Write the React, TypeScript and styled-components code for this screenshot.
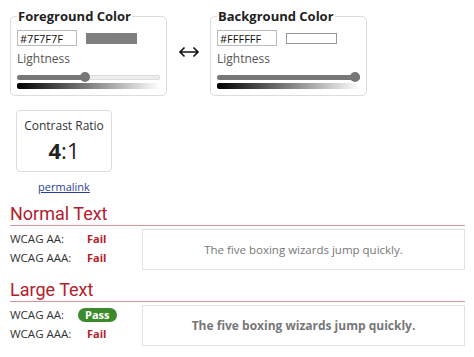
import styled, { createGlobalStyle } from 'styled-components';

const GlobalStyle = createGlobalStyle`
  body {
    margin: 0;
    background: #fff;
    font-family: "Open Sans", "Liberation Sans", sans-serif;
    color: #333;
  }
`;

type ColorPickerProps = {
  title: string;
  hex: string;
  lightness: number;
};

function ColorPicker({ title, hex, lightness }: ColorPickerProps) {
  return (
    <Fieldset>
      <Legend>{title}</Legend>
      <InputRow>
        <HexInput defaultValue={hex} readOnly />
        <Swatch $color={hex} />
      </InputRow>
      <Label>Lightness</Label>
      <Slider>
        <Track>
          <Fill style={{ width: `${lightness}%` }} />
        </Track>
        <Thumb style={{ left: `${lightness}%` }} />
      </Slider>
      <Gradient />
    </Fieldset>
  );
}

type Result = { level: string; pass: boolean };

function ResultBlock({ results, large }: { results: Result[]; large?: boolean }) {
  return (
    <Block>
      <Labels>
        {results.map(r => (
          <Row key={r.level}>
            <RowLabel>WCAG {r.level}:</RowLabel>
            <Badge $pass={r.pass}>{r.pass ? 'Pass' : 'Fail'}</Badge>
          </Row>
        ))}
      </Labels>
      <Sample $large={large}>The five boxing wizards jump quickly.</Sample>
    </Block>
  );
}

function App() {
  return (
    <Page>
      <GlobalStyle />
      <ColorRow>
        <ColorPicker title="Foreground Color" hex="#7F7F7F" lightness={49} />
        <Swap>
          <svg width="22" height="12" viewBox="0 0 22 12">
            <path d="M2 6h18M6.5 1.5L2 6l4.5 4.5M15.5 1.5L20 6l-4.5 4.5" fill="none" stroke="#111" strokeWidth="1.6" />
          </svg>
        </Swap>
        <ColorPicker title="Background Color" hex="#FFFFFF" lightness={100} />
      </ColorRow>

      <RatioColumn>
        <RatioBox>
          <RatioTitle>Contrast Ratio</RatioTitle>
          <RatioValue><b>4</b>:1</RatioValue>
        </RatioBox>
        <Permalink href="#">permalink</Permalink>
      </RatioColumn>

      <Heading>Normal Text</Heading>
      <ResultBlock results={[{ level: 'AA', pass: false }, { level: 'AAA', pass: false }]} />

      <Heading>Large Text</Heading>
      <ResultBlock large results={[{ level: 'AA', pass: true }, { level: 'AAA', pass: false }]} />
    </Page>
  );
}

export default App;

const Page = styled.div`
  padding: 7px 9px 0 10px;
`;

const ColorRow = styled.div`
  display: flex;
  align-items: center;
`;

const Fieldset = styled.fieldset`
  box-sizing: border-box;
  width: 157px;
  margin: 0;
  padding: 0 6px 6px 6px;
  border: 1px solid #dcdcdc;
  border-radius: 5px;
`;

const Legend = styled.legend`
  padding: 0 1px;
  font-weight: 700;
  font-size: 13px;
  line-height: 18px;
  color: #222;
`;

const InputRow = styled.div`
  display: flex;
  align-items: center;
  gap: 9px;
  margin-top: 5px;
`;

const HexInput = styled.input`
  box-sizing: border-box;
  width: 60px;
  height: 16px;
  margin: 0;
  padding: 0 2px;
  border: 1px solid #bbb;
  font-family: "Open Sans", sans-serif;
  font-size: 11px;
  color: #111;
`;

const Swatch = styled.div<{ $color: string }>`
  box-sizing: border-box;
  width: 51px;
  height: 11px;
  background: ${p => p.$color};
  border: 1px solid ${p => (p.$color === '#FFFFFF' ? '#999' : p.$color)};
`;

const Label = styled.div`
  margin-top: 5px;
  font-size: 12px;
  line-height: 16px;
  color: #555;
`;

const Slider = styled.div`
  position: relative;
  height: 10px;
  margin: 5px 5px 0 1px;
`;

const Track = styled.div`
  position: absolute;
  left: -1px;
  right: -5px;
  top: 2.5px;
  height: 5px;
  border-radius: 3px;
  background: #eee;
  box-shadow: inset 0 0 0 1px #ddd;
  overflow: hidden;
`;

const Fill = styled.div`
  height: 100%;
  background: #777;
`;

const Thumb = styled.div`
  position: absolute;
  top: 0;
  width: 10px;
  height: 10px;
  margin-left: -5px;
  border-radius: 50%;
  background: #777;
`;

const Gradient = styled.div`
  height: 6px;
  margin-top: 1px;
  border-radius: 2px;
  background: linear-gradient(to right, #000, #fff);
`;

const Swap = styled.div`
  display: flex;
  width: 43px;
  justify-content: center;
`;

const RatioColumn = styled.div`
  display: flex;
  flex-direction: column;
  align-items: center;
  width: 96px;
  margin: 14px 0 0 6px;
`;

const RatioBox = styled.div`
  box-sizing: border-box;
  width: 96px;
  height: 62px;
  padding-top: 7px;
  border: 1px solid #ddd;
  border-radius: 4px;
  text-align: center;
`;

const RatioTitle = styled.div`
  font-size: 12px;
  line-height: 16px;
  color: #333;
`;

const RatioValue = styled.div`
  margin-top: 3px;
  font-size: 22px;
  line-height: 26px;
  color: #222;
`;

const Permalink = styled.a`
  margin-top: 7px;
  font-size: 11px;
  line-height: 15px;
  color: #2b3f98;
`;

const Heading = styled.h2`
  margin: 9px 0 0;
  font-family: Roboto, "Liberation Sans", sans-serif;
  font-weight: 400;
  font-size: 18px;
  line-height: 22px;
  color: #b3202c;
  border-bottom: 1px solid #d7959b;
`;

const Block = styled.div`
  display: flex;
  margin-top: 3px;
`;

const Labels = styled.div`
  width: 132px;
  flex-shrink: 0;
`;

const Row = styled.div`
  display: flex;
  align-items: center;
  height: 19px;
`;

const RowLabel = styled.span`
  width: 68px;
  font-size: 11.5px;
  color: #333;
`;

const Badge = styled.span<{ $pass: boolean }>`
  padding: ${p => (p.$pass ? '0 7px' : '0 9px')};
  border-radius: 7px;
  font-size: 11px;
  font-weight: 700;
  line-height: 14px;
  color: ${p => (p.$pass ? '#fff' : '#b3202c')};
  background: ${p => (p.$pass ? '#3b8a2c' : 'transparent')};
`;

const Sample = styled.div<{ $large?: boolean }>`
  box-sizing: border-box;
  flex: 1;
  height: 41px;
  display: flex;
  align-items: center;
  justify-content: center;
  border: 1px solid #e2e2e2;
  font-size: ${p => (p.$large ? '12px' : '11.5px')};
  font-weight: ${p => (p.$large ? 700 : 400)};
  color: #777;
`;
